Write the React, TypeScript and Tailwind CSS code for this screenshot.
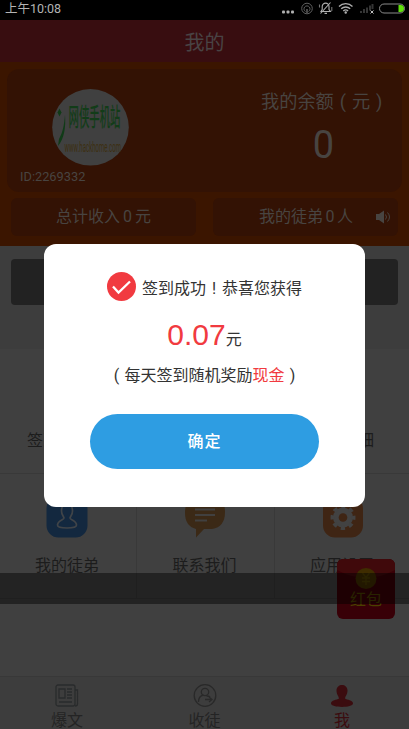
import React from 'react';

// Full-width punctuation, centred in its one-em cell
const Mark: React.FC<{ char: string }> = ({ char }) => {
  return <span className="inline-block w-[1em] text-center">{char}</span>;
};

const StatusBar: React.FC = () => {
  return (
    <div className="flex h-5 items-center justify-between bg-black pl-[5px] text-[12.5px] leading-[17px] text-[#b4b4b4]">
      <span className="-mt-[3px]">上午10:08</span>
      <svg width="129" height="20" viewBox="280 0 129 20" fill="none">
        <g fill="#b0b0b0">
          <rect x="282" y="10.5" width="3" height="3" rx="1" />
          <rect x="286.5" y="10.5" width="3" height="3" rx="1" />
          <rect x="291" y="10.5" width="3" height="3" rx="1" />
        </g>
        <g stroke="#606060">
          <circle cx="307" cy="8.5" r="5.3" />
          <path d="M305.5 11.5a3 3 0 1 1 3 0" />
          <path d="M307 9v4" strokeWidth="1.5" />
        </g>
        <g stroke="#b0b0b0" strokeWidth="1.1">
          <path d="M321 11.5h9.5l-1.5-2v-3a3.4 3.4 0 0 0-6.8 0v3z" />
          <path d="M324.5 13.4h2.5M320.5 13.5l10-11" />
          <path d="M319.5 4.5v3M331.8 7v4" stroke="#777777" />
        </g>
        <g stroke="#b0b0b0" strokeWidth="1.3">
          <path d="M339 6.5a9.5 9.5 0 0 1 13.5 0" />
          <path d="M341.2 8.8a6.5 6.5 0 0 1 9 0" />
          <path d="M343.3 11a3.5 3.5 0 0 1 4.8 0" />
          <circle cx="345.7" cy="12.5" r=".6" fill="#b0b0b0" />
        </g>
        <g fill="#353535">
          <rect x="360" y="11" width="2" height="2" />
          <rect x="363" y="9" width="2" height="4" />
          <rect x="366" y="7.5" width="2" height="5.5" />
          <rect x="369" y="5.5" width="2" height="5" />
          <rect x="371.5" y="4" width="2" height="5" />
        </g>
        <path d="M370.5 10.5l3 3M373.5 10.5l-3 3" stroke="#c0c0c0" />
        <rect x="379.5" y="4" width="25" height="9" rx="4.5" stroke="#8a8a8a" />
        <path d="M398.5 5h2a3.5 3.5 0 0 1 0 7h-2z" fill="#61e20b" />
      </svg>
    </div>
  );
};

const Avatar: React.FC = () => {
  return (
    <svg className="block" width="77" height="77" viewBox="52 89 77 77">
      <circle cx="90.5" cy="127.3" r="38.3" fill="#404040" />
      <path d="M59.5 108.5l2 4-2 4-2-4z" fill="#103b17" />
      <path d="M65 115c1 13-1 24-7 31l1-7c4-7 5-14 6-24z" fill="#103b17" />
      <text transform="translate(68.5 125.5) scale(.425 1)" fontSize="24.5" fontWeight="500" fill="#123c18">
        网侠手机站
      </text>
      <text
        transform="translate(64.5 151.5) scale(.5 1)"
        fontSize="14"
        textLength="113"
        lengthAdjust="spacingAndGlyphs"
        fill="#3d2f10"
      >
        www.hackhome.com
      </text>
    </svg>
  );
};

const Account: React.FC = () => {
  return (
    <section className="h-[184px] bg-[#3b1500] pt-[7px] text-[#484441]">
      <div className="mx-[7px] flex h-[123px] justify-between rounded-xl bg-[#331204]">
        <div className="pt-5 pl-[13px]">
          <div className="pl-8">
            <Avatar />
          </div>
          <p className="mt-[3px] text-[12.8px] leading-[15px]">ID:2269332</p>
        </div>
        <div className="w-[141px] pt-[21px]">
          <p className="text-[18.2px] leading-6 whitespace-nowrap">
            我的余额
            <Mark char="(" />元<Mark char=")" />
          </p>
          <p className="pr-4 pt-[7px] text-center text-[38px] leading-[48px]">0</p>
        </div>
      </div>
      <div className="mt-1.5 flex justify-between px-[11px] text-base leading-[38px]">
        <div className="flex h-[38px] w-[185px] justify-center gap-[3px] rounded-md bg-[#331204]">
          <span>总计收入</span>
          <span>0</span>
          <span>元</span>
        </div>
        <div className="flex h-[38px] w-[185px] items-center rounded-md bg-[#331204] pl-[46px]">
          <span>我的徒弟</span>
          <span className="mx-[2.5px]">0</span>
          <span>人</span>
          <svg className="ml-auto mr-[7px]" width="16" height="16" viewBox="0 0 16 16" fill="none">
            <path d="M1 5h3l5-3.5v13L4 11H1z" fill="#484441" />
            <path d="M10.5 5.5q2 2.5 0 5M12.5 3.5q4 4.5 0 9" stroke="#484441" />
          </svg>
        </div>
      </div>
    </section>
  );
};

const MenuGrid: React.FC = () => {
  return (
    <section className="grid h-[250px] grid-cols-[137px_138px_134px] grid-rows-[125px_125px] text-base leading-5 text-[#1c1c1c]">
      <div className="border-b border-[#393939] pt-[82px] pl-[27px]">签到</div>
      <div className="border-b border-[#393939]" />
      <div className="border-b border-[#393939] pt-[82px] pl-[35px]">收入明细</div>
      <div className="flex flex-col items-center border-r border-b border-[#393939] pt-[22px] pr-0.5">
        <svg width="42" height="42" viewBox="0 0 42 42" fill="none">
          <rect x=".5" y=".5" width="41" height="41" rx="12" fill="#13283f" />
          <path
            d="M15.5 15c0-10 11-10 11 0 0 4-2 5-2.5 7 0 2 6.5 2.5 6.5 7 0 4-19 4-19 0 0-4.5 6.5-5 6.5-7-.5-2-2.5-3-2.5-7z"
            stroke="#404448"
            strokeWidth="1.7"
          />
        </svg>
        <span className="mt-[18px]">我的徒弟</span>
      </div>
      <div className="flex flex-col items-center border-r border-b border-[#393939] pt-[22px] pr-0.5">
        <svg width="42" height="42" viewBox="0 0 42 42">
          <path d="M14 1h14q13 0 13 15t-13 17h-8l-8 8.5V33Q1 30 1 17 1 1 14 1z" fill="#3b2916" />
          <path d="M11 13.5h20M11 19h20M11 24.5h12" stroke="#41403f" strokeWidth="2.2" />
        </svg>
        <span className="mt-[18px]">联系我们</span>
      </div>
      <div className="flex flex-col items-center border-b border-[#393939] pt-[22px]">
        <svg className="ml-0.5" width="42" height="42" viewBox="0 0 42 42">
          <rect x="1" y=".5" width="40" height="41" rx="12" fill="#3f2514" />
          <circle cx="21" cy="21.5" r="10" fill="#424242" />
          <circle
            cx="21"
            cy="21.5"
            r="10.5"
            fill="none"
            stroke="#424242"
            strokeWidth="4"
            strokeDasharray="4.2 4.047"
            strokeDashoffset="2.1"
          />
          <circle cx="21" cy="21.5" r="4.3" fill="#3f2514" />
        </svg>
        <span className="mt-[18px]">应用设置</span>
      </div>
    </section>
  );
};

const RedPacket: React.FC = () => {
  return (
    <div className="absolute top-[559px] left-[337px] flex h-[60px] w-[58px] flex-col overflow-hidden rounded-md bg-[#380007] text-[#4a4000]">
      <svg className="block" width="58" height="30" viewBox="0 0 58 30" fill="none">
        <path d="M0 0h58v11Q29 27 0 11z" fill="#40090b" />
        <circle cx="29" cy="19.5" r="10.5" fill="#3f2c00" />
        <path d="M25.5 14l3.5 4.5 3.5-4.5M29 18.5V26M25 19h8M25 22.5h8" stroke="#4c3e00" strokeWidth="1.4" />
      </svg>
      <span className="mt-px text-center text-base leading-5">红包</span>
    </div>
  );
};

const TabBar: React.FC = () => {
  return (
    <nav className="grid h-[53px] grid-cols-[134px_141px_134px] border-t border-[#383838] bg-[#3d3d3d] text-base leading-5 text-[#242424]">
      <div className="flex flex-col items-center pt-[7px]">
        <svg width="24" height="23" viewBox="0 0 24 23" fill="none" stroke="#292b2c" strokeWidth="1.3">
          <rect x="1" y="1" width="19" height="21" rx="2" />
          <path d="M20 6h2.5v14q0 2-2.5 2M4 5h6v9H4zM12 5h5M12 8h5M12 11h5M12 14h5M4 18h13" />
        </svg>
        <span className="mt-1">爆文</span>
      </div>
      <div className="flex flex-col items-center pt-[7px]">
        <svg width="24" height="23" viewBox="0 0 24 23" fill="none" stroke="#292929" strokeWidth="1.3">
          <circle cx="12" cy="11.5" r="10.8" />
          <circle cx="12" cy="8" r="3.7" />
          <path d="M5.5 18q0-6 5-7M13.5 12q3 0 3.5 1M12 15.5h6M16 13l3 2.5-3 2.5" />
        </svg>
        <span className="mt-1">收徒</span>
      </div>
      <div className="flex flex-col items-center pt-[7px] text-[#3b0c0f]">
        <svg width="24" height="23" viewBox="0 0 24 23" fill="#3b0c0f">
          <path d="M6.5 6.5C6.5-1 17.5-1 17.5 6.5c0 4-2 5-2.5 8 2 1.5 8 1.5 8 5 0 4.5-22 4.5-22 0 0-3.5 6-3.5 8-5-.5-3-2.5-4-2.5-8z" />
        </svg>
        <span className="mt-1">我</span>
      </div>
    </nav>
  );
};

const CheckInDialog: React.FC = () => {
  return (
    <div className="absolute top-[243.5px] left-11 flex h-[263.5px] w-[321px] flex-col items-center rounded-xl bg-white text-base text-[#333333]">
      <div className="mt-7 flex h-[30px] items-center gap-1.5">
        <svg width="29" height="29" viewBox="0 0 29 29" fill="none">
          <circle cx="14.5" cy="14.5" r="14.5" fill="#f13a40" />
          <path d="M6 14.5l5.5 6L23 9.5" stroke="#ffffff" strokeWidth="2.3" />
        </svg>
        <span className="pt-1">
          签到成功
          <Mark char="!" />
          恭喜您获得
        </span>
      </div>
      <p className="mt-[13px] leading-10">
        <span className="font-['Liberation_Sans',sans-serif] text-[30px] text-[#f13a40]">0.07</span>
        <span>元</span>
      </p>
      <p className="mt-1 leading-6">
        <Mark char="(" />
        每天签到随机奖励<span className="text-[#f13a40]">现金</span>
        <Mark char=")" />
      </p>
      <button className="mt-[26px] h-[55px] w-[229px] rounded-full bg-[#2e9de2] pt-px font-medium tracking-[1px] text-white">
        确定
      </button>
    </div>
  );
};

const App: React.FC = () => {
  return (
    <div className="relative h-[729px] w-[409px] overflow-hidden bg-[#404040] font-['Roboto','Noto_Sans_CJK_SC',sans-serif]">
      <StatusBar />
      <header className="h-[42px] bg-[#380d10] text-center text-[20px] leading-[46px] text-[#494344]">我的</header>
      <Account />
      <div className="h-[103px] bg-[#3d3d3d] px-[11px] pt-[13px]">
        <div className="h-[46px] rounded bg-[#222222]" />
      </div>
      <MenuGrid />
      <div className="h-[77px]" />
      <TabBar />
      <RedPacket />
      <div className="absolute top-[573px] left-0 h-[31px] w-full bg-black/45" />
      <CheckInDialog />
    </div>
  );
};

export default App;
